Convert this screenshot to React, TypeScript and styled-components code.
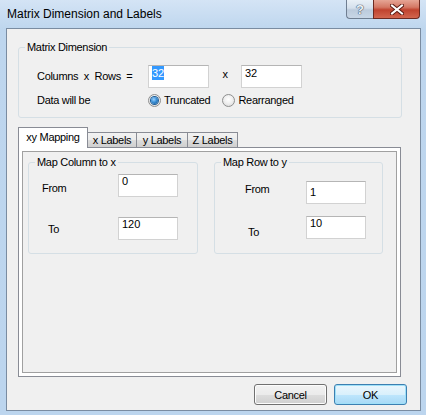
import React from "react";
import styled, { createGlobalStyle } from "styled-components";

const GlobalStyle = createGlobalStyle`
  html, body {
    margin: 0;
    padding: 0;
  }
  body {
    width: 426px;
    height: 415px;
    overflow: hidden;
    font-family: "Liberation Sans", Arial, sans-serif;
  }
`;

const Window = styled.div`
  width: 426px;
  height: 415px;
  box-sizing: border-box;
  display: flex;
  flex-direction: column;
  background: linear-gradient(180deg, #d4e4f5 0%, #bed6ee 7%, #bcd5ee 100%);
`;

const TitleBar = styled.div`
  height: 28px;
  display: flex;
  align-items: flex-start;
  padding: 0 6px 0 7px;
  box-sizing: border-box;
`;

const TitleText = styled.div`
  flex: 1;
  margin-top: 7px;
  font-size: 12px;
  line-height: 14px;
  color: #000;
`;

const CaptionButtons = styled.div`
  display: flex;
  height: 19px;
`;

const HelpButton = styled.div`
  width: 27px;
  height: 19px;
  box-sizing: border-box;
  border: 1px solid #6f7e91;
  border-top: none;
  border-right: none;
  border-radius: 0 0 0 4px;
  background: linear-gradient(180deg, #e9f0f7 0%, #d5e0ec 45%, #bccbdc 55%, #c8d6e6 100%);
  display: flex;
  align-items: center;
  justify-content: center;
  font-size: 13px;
  font-weight: bold;
  color: #eef3f8;
  text-shadow: 0 0 1px #44546a, 0 0 1px #44546a, 0 0 1px #44546a;
`;

const CloseButton = styled.div`
  width: 47px;
  height: 19px;
  box-sizing: border-box;
  border: 1px solid #6d2a22;
  border-top: none;
  border-radius: 0 0 4px 0;
  background: linear-gradient(180deg, #e6a595 0%, #d47865 40%, #c0432f 55%, #d2664f 100%);
  display: flex;
  align-items: center;
  justify-content: center;
`;

const Client = styled.div`
  margin-left: 6px;
  width: 415px;
  height: 383px;
  box-sizing: border-box;
  border: 1px solid #7a8ca1;
  background: #f0f0f0;
  display: flex;
  flex-direction: column;
  font-size: 11px;
  letter-spacing: -0.3px;
  color: #000;
`;

const GroupBox = styled.fieldset<{ $width: number; $height?: number }>`
  box-sizing: border-box;
  width: ${(p) => p.$width}px;
  ${(p) => (p.$height ? `height: ${p.$height}px;` : "")}
  margin: 0;
  padding: 0;
  min-width: 0;
  border: 1px solid #d5dfe5;
  border-radius: 3px;
`;

const GroupTitle = styled.legend`
  margin-left: 6px;
  padding: 0 2px;
  font-size: 11px;
  line-height: 13px;
`;

const MatrixBox = styled(GroupBox)`
  margin: 12px 0 0 11px;
  padding-bottom: 10px;
`;

const MatrixRow = styled.div<{ $top: number }>`
  display: flex;
  align-items: center;
  margin-top: ${(p) => p.$top}px;
  padding-left: 18px;
`;

const RowLabel = styled.span`
  width: 111px;
  white-space: pre;
  line-height: 13px;
`;

const TimesSign = styled.span`
  width: 32px;
  text-align: center;
  align-self: flex-start;
  padding-top: 3px;
`;

const TextBox = styled.div<{ $width: number; $padTop: number }>`
  width: ${(p) => p.$width}px;
  height: 23px;
  box-sizing: border-box;
  padding: ${(p) => p.$padTop}px 0 0 3px;
  border: 1px solid #d2d2d2;
  border-top-color: #b5b5b5;
  background: #fff;
  font-size: 11px;
  line-height: 13px;
  letter-spacing: 0;
`;

const Selected = styled.span`
  background: #3399ff;
  color: #fff;
  padding: 1px 0;
`;

const RadioOption = styled.label<{ $gap: number }>`
  display: flex;
  align-items: center;
  gap: 3px;
  margin-right: ${(p) => p.$gap}px;
  line-height: 13px;
`;

const RadioCircle = styled.span<{ $checked?: boolean }>`
  width: 13px;
  height: 13px;
  box-sizing: border-box;
  border-radius: 50%;
  border: 1px solid #8e8f8f;
  background: radial-gradient(circle at 50% 40%, #ffffff 0%, #f0f0f0 45%, #d6d6d6 100%);
  display: flex;
  align-items: center;
  justify-content: center;

  &::after {
    content: "";
    display: ${(p) => (p.$checked ? "block" : "none")};
    width: 7px;
    height: 7px;
    border-radius: 50%;
    background: radial-gradient(circle at 40% 35%, #9fd4ff 0%, #3a8fd6 45%, #0d4f8c 100%);
    box-shadow: 0 0 0 1px #1d5c96;
  }
`;

const TabArea = styled.div`
  margin: 10px 0 0 11px;
  display: flex;
  flex-direction: column;
`;

const TabStrip = styled.div`
  display: flex;
  align-items: flex-end;
  height: 20px;
  position: relative;
  z-index: 1;
  margin-bottom: -1px;
`;

const Tab = styled.div<{ $active?: boolean; $width: number }>`
  width: ${(p) => p.$width}px;
  height: ${(p) => (p.$active ? 21 : 16)}px;
  box-sizing: border-box;
  border: 1px solid #898c95;
  border-bottom: ${(p) => (p.$active ? "none" : "1px solid #898c95")};
  margin-left: ${(p) => (p.$active ? 0 : -1)}px;
  background: ${(p) => (p.$active ? "#fff" : "linear-gradient(180deg, #f2f2f2 0%, #ebebeb 50%, #dddddd 51%, #cfcfcf 100%)")};
  display: flex;
  align-items: center;
  justify-content: center;
  padding-bottom: ${(p) => (p.$active ? 2 : 0)}px;
  line-height: 13px;
  white-space: nowrap;
`;

const TabPanel = styled.div`
  width: 383px;
  height: 230px;
  box-sizing: border-box;
  border: 1px solid #898c95;
  background: #fff;
  padding: 3px;
  display: flex;
`;

const TabPage = styled.div`
  flex: 1;
  border: 1px solid #a0a0a0;
  background: #f0f0f0;
  display: flex;
  align-items: flex-start;
  gap: 16px;
  padding-left: 5px;
`;

const MapBox = styled(GroupBox)`
  margin-top: 4px;
`;

const FieldRow = styled.div<{ $top: number }>`
  display: flex;
  align-items: flex-start;
  margin-top: ${(p) => p.$top}px;
`;

const FieldLabel = styled.span<{ $indent: number; $width: number; $dy: number }>`
  box-sizing: border-box;
  width: ${(p) => p.$width}px;
  padding-left: ${(p) => p.$indent}px;
  margin-top: ${(p) => p.$dy}px;
  line-height: 13px;
`;

const ButtonRow = styled.div`
  display: flex;
  justify-content: flex-end;
  gap: 7px;
  margin-top: 7px;
  padding-right: 13px;
`;

const DialogButton = styled.button<{ $default?: boolean }>`
  width: 73px;
  height: 21px;
  box-sizing: border-box;
  border: 1px solid ${(p) => (p.$default ? "#3c7fb1" : "#707070")};
  border-radius: 3px;
  background: ${(p) =>
    p.$default
      ? "linear-gradient(180deg, #eaf6fd 0%, #d9f0fc 50%, #bee6fd 51%, #a7d9f5 100%)"
      : "linear-gradient(180deg, #f2f2f2 0%, #ebebeb 50%, #dddddd 51%, #cfcfcf 100%)"};
  box-shadow: inset 0 0 0 1px ${(p) => (p.$default ? "#9fe0f8" : "#fcfcfc")};
  font-family: "Liberation Sans", Arial, sans-serif;
  font-size: 11px;
  letter-spacing: -0.3px;
  color: #000;
  padding: 0;
`;

function CloseGlyph() {
  return (
    <svg width="14" height="11" viewBox="0 0 14 11">
      <path d="M2 1.5 L12 9.5 M12 1.5 L2 9.5" stroke="#5a1a12" strokeWidth="4" strokeLinecap="square" />
      <path d="M2 1.5 L12 9.5 M12 1.5 L2 9.5" stroke="#ffffff" strokeWidth="2" strokeLinecap="square" />
    </svg>
  );
}

function Radio({ label, checked, gap }: { label: string; checked?: boolean; gap: number }) {
  return (
    <RadioOption $gap={gap}>
      <RadioCircle $checked={checked} />
      {label}
    </RadioOption>
  );
}

export default function App() {
  return (
    <>
      <GlobalStyle />
      <Window>
        <TitleBar>
          <TitleText>Matrix Dimension and Labels</TitleText>
          <CaptionButtons>
            <HelpButton>?</HelpButton>
            <CloseButton>
              <CloseGlyph />
            </CloseButton>
          </CaptionButtons>
        </TitleBar>

        <Client>
          <MatrixBox $width={384}>
            <GroupTitle>Matrix Dimension</GroupTitle>
            <MatrixRow $top={11}>
              <RowLabel>{"Columns  x  Rows  ="}</RowLabel>
              <TextBox $width={61} $padTop={1}>
                <Selected>32</Selected>
              </TextBox>
              <TimesSign>x</TimesSign>
              <TextBox $width={61} $padTop={1}>32</TextBox>
            </MatrixRow>
            <MatrixRow $top={6}>
              <RowLabel>Data will be</RowLabel>
              <Radio label="Truncated" checked gap={12} />
              <Radio label="Rearranged" gap={0} />
            </MatrixRow>
          </MatrixBox>

          <TabArea>
            <TabStrip>
              <Tab $active $width={70}>xy Mapping</Tab>
              <Tab $width={50}>x Labels</Tab>
              <Tab $width={52}>y Labels</Tab>
              <Tab $width={51}>Z Labels</Tab>
            </TabStrip>
            <TabPanel>
              <TabPage>
                <MapBox $width={170} $height={98}>
                  <GroupTitle>Map Column to x</GroupTitle>
                  <FieldRow $top={5}>
                    <FieldLabel $indent={13} $width={89} $dy={8}>From</FieldLabel>
                    <TextBox $width={60} $padTop={0}>0</TextBox>
                  </FieldRow>
                  <FieldRow $top={20}>
                    <FieldLabel $indent={19} $width={89} $dy={6}>To</FieldLabel>
                    <TextBox $width={60} $padTop={0}>120</TextBox>
                  </FieldRow>
                </MapBox>
                <MapBox $width={169} $height={98}>
                  <GroupTitle>Map Row to y</GroupTitle>
                  <FieldRow $top={12}>
                    <FieldLabel $indent={30} $width={91} $dy={2}>From</FieldLabel>
                    <TextBox $width={60} $padTop={4}>1</TextBox>
                  </FieldRow>
                  <FieldRow $top={12}>
                    <FieldLabel $indent={33} $width={91} $dy={10}>To</FieldLabel>
                    <TextBox $width={60} $padTop={0}>10</TextBox>
                  </FieldRow>
                </MapBox>
              </TabPage>
            </TabPanel>
          </TabArea>

          <ButtonRow>
            <DialogButton>Cancel</DialogButton>
            <DialogButton $default>OK</DialogButton>
          </ButtonRow>
        </Client>
      </Window>
    </>
  );
}
